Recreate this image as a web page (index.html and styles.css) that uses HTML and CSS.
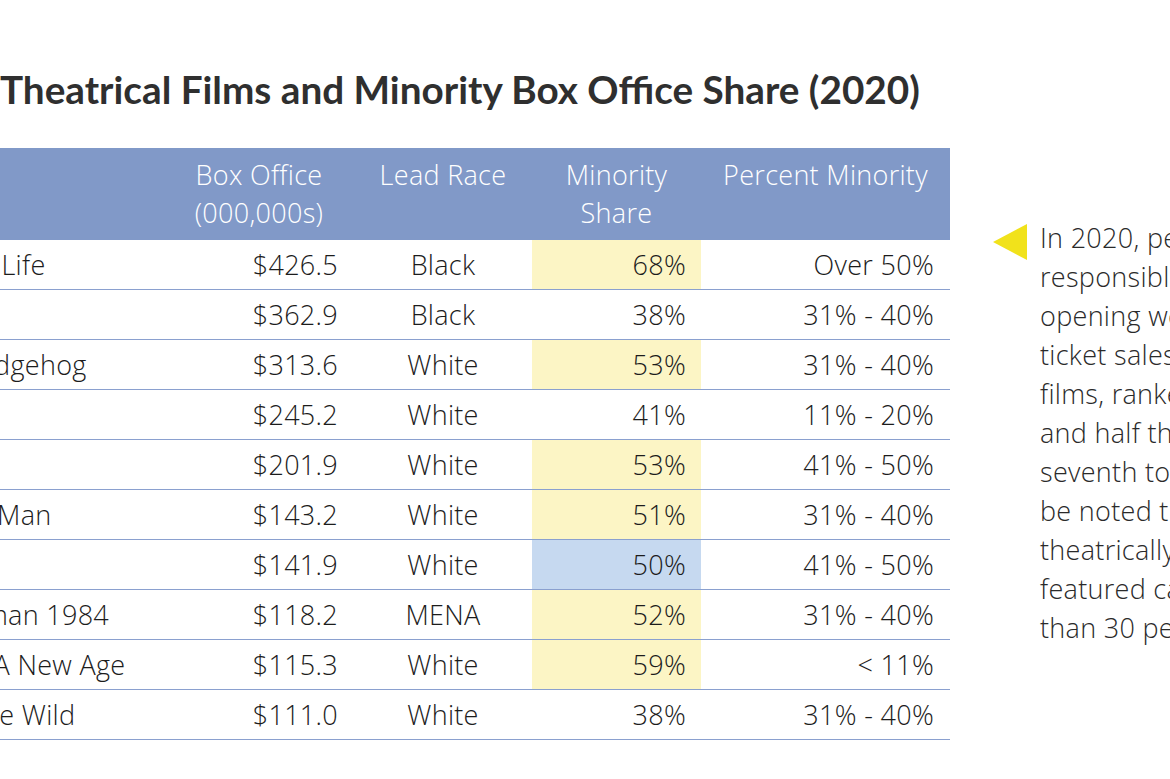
FILE: index.html
```html
<!DOCTYPE html>
<html lang="en">
<head>
<meta charset="utf-8">
<title>Theatrical Films and Minority Box Office Share (2020)</title>
<link rel="stylesheet" href="styles.css">
</head>
<body>
<div class="page">
  <div class="main">
    <h1 class="title">Theatrical Films and Minority Box Office Share (2020)</h1>
    <table class="films">
      <colgroup>
        <col class="w-title">
        <col class="w-box">
        <col class="w-race">
        <col class="w-share">
        <col class="w-pct">
      </colgroup>
      <thead>
        <tr>
          <th class="c-title">Title</th>
          <th class="c-box">Box Office<br>(000,000s)</th>
          <th class="c-race">Lead Race</th>
          <th class="c-share">Minority<br>Share</th>
          <th class="c-pct">Percent Minority</th>
        </tr>
      </thead>
      <tbody>
        <tr><td class="c-title">Bad Boys for Life</td><td class="c-box">$426.5</td><td class="c-race">Black</td><td class="c-share hl-y">68%</td><td class="c-pct">Over 50%</td></tr>
        <tr><td class="c-title">Tenet</td><td class="c-box">$362.9</td><td class="c-race">Black</td><td class="c-share">38%</td><td class="c-pct">31% - 40%</td></tr>
        <tr><td class="c-title">Sonic the Hedgehog</td><td class="c-box">$313.6</td><td class="c-race">White</td><td class="c-share hl-y">53%</td><td class="c-pct">31% - 40%</td></tr>
        <tr><td class="c-title">Dolittle</td><td class="c-box">$245.2</td><td class="c-race">White</td><td class="c-share">41%</td><td class="c-pct">11% - 20%</td></tr>
        <tr><td class="c-title">Birds of Prey</td><td class="c-box">$201.9</td><td class="c-race">White</td><td class="c-share hl-y">53%</td><td class="c-pct">41% - 50%</td></tr>
        <tr><td class="c-title">The Invisible Man</td><td class="c-box">$143.2</td><td class="c-race">White</td><td class="c-share hl-y">51%</td><td class="c-pct">31% - 40%</td></tr>
        <tr><td class="c-title">Onward</td><td class="c-box">$141.9</td><td class="c-race">White</td><td class="c-share hl-b">50%</td><td class="c-pct">41% - 50%</td></tr>
        <tr><td class="c-title">Wonder Woman 1984</td><td class="c-box">$118.2</td><td class="c-race">MENA</td><td class="c-share hl-y">52%</td><td class="c-pct">31% - 40%</td></tr>
        <tr><td class="c-title">The Croods: A New Age</td><td class="c-box">$115.3</td><td class="c-race">White</td><td class="c-share hl-y">59%</td><td class="c-pct">&lt; 11%</td></tr>
        <tr><td class="c-title">The Call of the Wild</td><td class="c-box">$111.0</td><td class="c-race">White</td><td class="c-share">38%</td><td class="c-pct">31% - 40%</td></tr>
      </tbody>
    </table>
  </div>
  <aside class="note">
    <span class="pointer"></span>
    <p class="note-text">In 2020, people of color were<br>responsible for the majority of<br>opening weekend domestic<br>ticket sales for six of the top 10<br>films, ranked by global box office,<br>and half the ticket sales for the<br>seventh top film. It should<br>be noted that the top films<br>theatrically released in 2020<br>featured casts that were less<br>than 30 percent minority.</p>
  </aside>
</div>
</body>
</html>
```

FILE: styles.css
```css
html, body {
  margin: 0;
  padding: 0;
  background: #ffffff;
  overflow: hidden;
}

body {
  font-family: "Open Sans", "Liberation Sans", sans-serif;
  color: #1f1f1f;
  width: 1170px;
  height: 779px;
}

.page {
  display: flex;
  align-items: flex-start;
  margin-left: -180px;
}

.main {
  display: flex;
  flex-direction: column;
  flex: none;
}

.title {
  margin: 67px 0 0 180px;
  font-family: "Lato", "Open Sans", sans-serif;
  font-weight: 700;
  font-size: 38.7px;
  line-height: 44px;
  color: #2f2f2f;
  white-space: nowrap;
}

.films {
  margin-top: 37px;
  width: 1130px;
  table-layout: fixed;
  border-collapse: separate;
  border-spacing: 0;
  font-weight: 300;
  font-size: 27px;
  letter-spacing: 0.3px;
}

.w-title { width: 344px; }
.w-box { width: 190px; }
.w-race { width: 178px; }
.w-share { width: 169px; }
.w-pct { width: 249px; }

.films th {
  background: #8199c8;
  color: #ffffff;
  font-weight: 300;
  vertical-align: top;
  line-height: 38px;
  padding: 8px 0 8px;
  text-align: center;
  white-space: nowrap;
}

.films td {
  line-height: 49px;
  padding: 0;
  border-bottom: 1px solid #8aa0cf;
  white-space: nowrap;
  color: #1c1c1c;
}

.films .c-title { text-align: left; padding-left: 17px; }
.films td.c-box { text-align: right; padding-right: 16px; }
.films td.c-race { text-align: center; }
.films td.c-share { text-align: right; padding-right: 15px; }
.films td.c-pct { text-align: right; padding-right: 16px; }

.hl-y { background: #fcf5c5; }
.hl-b { background: #c6d9f0; }

.note {
  display: flex;
  align-items: flex-start;
  margin: 224px 0 0 43px;
  flex: none;
}

.pointer {
  width: 0;
  height: 0;
  border-top: 18px solid transparent;
  border-bottom: 18px solid transparent;
  border-right: 34px solid #f1e21b;
  flex: none;
}

.note-text {
  margin: -6px 0 0 13px;
  font-weight: 300;
  font-size: 27px;
  letter-spacing: 0.3px;
  line-height: 39px;
  white-space: nowrap;
  color: #2a2a2a;
}
```
